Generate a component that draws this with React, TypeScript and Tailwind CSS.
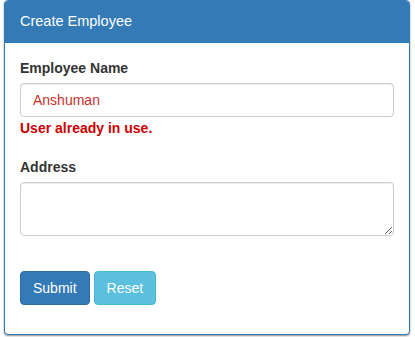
export default function App() {
  return (
    <main className="min-h-[337px] bg-white pl-[4px] pr-[5px] font-['Liberation_Sans',Arial,sans-serif] text-[14px] text-[#333]">
      <section className="overflow-hidden rounded-[4px] border border-[#337ab7] bg-white shadow-[0_1px_2px_rgba(0,0,0,0.45)]">
        <div className="flex h-[42px] items-center bg-[#337ab7] px-[15px] text-[14.5px] text-white">
          Create Employee
        </div>

        <form className="px-[15px] pb-[29px] pt-[15px]">
          <label className="mb-[5px] block text-[14px] font-bold leading-[20px] text-[#333]">
            Employee Name
          </label>
          <input
            defaultValue="Anshuman"
            className="block h-[34px] w-full rounded-[4px] border border-[#ccc] px-[12px] text-[14px] text-[#c9302c] shadow-[inset_0_1px_1px_rgba(0,0,0,0.075)] outline-none"
          />
          <p className="mt-[1px] text-[14px] font-bold leading-[20px] text-[#cc0000]">
            User already in use.
          </p>

          <label className="mb-[5px] mt-[19px] block text-[14px] font-bold leading-[20px] text-[#333]">
            Address
          </label>
          <textarea className="block h-[54px] w-full rounded-[4px] border border-[#ccc] px-[12px] py-[6px] text-[14px] shadow-[inset_0_1px_1px_rgba(0,0,0,0.075)] outline-none" />

          <div className="mt-[35px] flex gap-[4px]">
            <button
              type="button"
              className="h-[34px] rounded-[4px] border border-[#2e6da4] bg-[#337ab7] px-[12px] text-[14px] text-white"
            >
              Submit
            </button>
            <button
              type="button"
              className="h-[34px] rounded-[4px] border border-[#46b8da] bg-[#5bc0de] px-[12px] text-[14px] text-white"
            >
              Reset
            </button>
          </div>
        </form>
      </section>
    </main>
  )
}
